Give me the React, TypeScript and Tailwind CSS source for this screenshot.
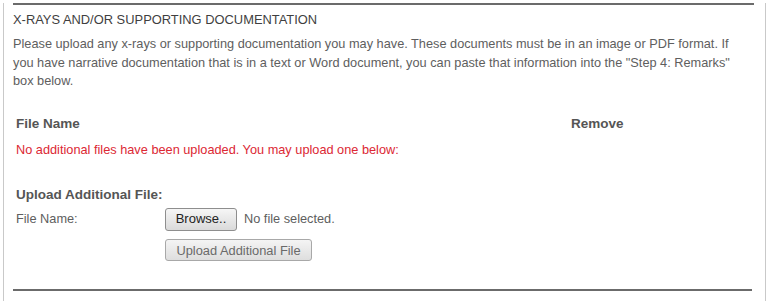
export default function App() {
  const font = { fontFamily: '"Liberation Sans", Arial, sans-serif' };

  return (
    <div className="w-[768px] h-[302px] bg-white overflow-hidden" style={font}>
      <div className="ml-[3px] w-[763px] h-[298px] border-l border-r border-[#c9c9c9] px-[9px]">
        {/* top rule */}
        <div className="mt-[3px] h-[2px] w-[741px] bg-[#6b6b6b]" />

        {/* Section heading */}
        <h2 className="mt-[6px] text-[12.9px] leading-[18px] text-[#3f3f3f] font-normal">
          X-RAYS AND/OR SUPPORTING DOCUMENTATION
        </h2>
        <p className="mt-[6px] text-[12.75px] leading-[18.5px] text-[#5e5e5e] whitespace-nowrap">
          Please upload any x-rays or supporting documentation you may have. These documents must be in an image or PDF format. If
          <br />
          you have narrative documentation that is in a text or Word document, you can paste that information into the "Step 4: Remarks"
          <br />
          box below.
        </p>

        {/* Files table */}
        <div className="pl-[3px]">
          <div className="mt-[24px] flex text-[13.5px] leading-[18px] font-bold text-[#555]">
            <span className="w-[555px]">File Name</span>
            <span>Remove</span>
          </div>
          <p className="mt-[8px] text-[12.75px] leading-[18px] text-[#dc2834]">
            No additional files have been uploaded. You may upload one below:
          </p>

          {/* Upload form */}
          <h3 className="mt-[27px] text-[13.5px] leading-[18px] font-bold text-[#555]">
            Upload Additional File:
          </h3>
          <div className="mt-[4px] flex items-center text-[12.75px] text-[#5e5e5e]">
            <span className="w-[149px]">File Name:</span>
            <button className="h-[23px] w-[72px] rounded-[3px] border border-[#8e8e8e] bg-gradient-to-b from-[#f6f6f6] to-[#dadada] text-[13px] text-[#222]">
              Browse..
            </button>
            <span className="ml-[7px]">No file selected.</span>
          </div>
          <div className="mt-[7px] pl-[149px]">
            <button className="h-[22px] w-[147px] rounded-[3px] border border-[#a8a8a8] bg-gradient-to-b from-[#f4f4f4] to-[#dedede] text-[12.85px] text-[#6a6a6a]">
              Upload Additional File
            </button>
          </div>
        </div>

        {/* bottom rule */}
        <div className="mt-[27px] h-[2px] w-[739px] bg-[#6b6b6b]" />
      </div>
    </div>
  );
}
